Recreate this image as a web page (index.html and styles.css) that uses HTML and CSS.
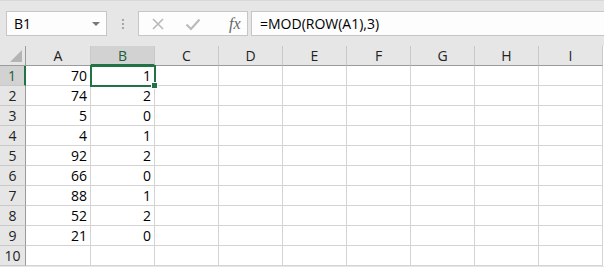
FILE: index.html
```html
<!DOCTYPE html>
<html lang="en">
<head>
    <meta charset="UTF-8">
    <title>MOD ROW</title>
    <link rel="stylesheet" href="styles.css">
</head>
<body>
    <div class="toolbar">
        <div class="name-box">
            <span>B1</span>
            <span class="caret"></span>
        </div>
        <div class="grip">
            <span></span><span></span><span></span>
        </div>
        <div class="buttons">
            <svg class="icon" width="14" height="14" viewBox="0 0 14 14">
                <path d="M2 2 L12 12 M12 2 L2 12" stroke="#b9b9b9" stroke-width="1.6" fill="none"/>
            </svg>
            <svg class="icon" width="16" height="14" viewBox="0 0 16 14">
                <path d="M1.5 7.5 L6 12 L14.5 2.5" stroke="#b9b9b9" stroke-width="2" fill="none"/>
            </svg>
            <span class="fx">fx</span>
        </div>
        <div class="formula">=MOD(ROW(A1),3)</div>
    </div>
    <div class="sheet">
        <div class="corner"><span class="tri"></span></div>
        <div class="col">A</div>
        <div class="col active">B</div>
        <div class="col">C</div>
        <div class="col">D</div>
        <div class="col">E</div>
        <div class="col">F</div>
        <div class="col">G</div>
        <div class="col">H</div>
        <div class="col">I</div>

        <div class="row active">1</div>
        <div class="cell">70</div><div class="cell selected">1<span class="handle"></span></div><div class="cell"></div><div class="cell"></div><div class="cell"></div><div class="cell"></div><div class="cell"></div><div class="cell"></div><div class="cell"></div>
        <div class="row">2</div>
        <div class="cell">74</div><div class="cell">2</div><div class="cell"></div><div class="cell"></div><div class="cell"></div><div class="cell"></div><div class="cell"></div><div class="cell"></div><div class="cell"></div>
        <div class="row">3</div>
        <div class="cell">5</div><div class="cell">0</div><div class="cell"></div><div class="cell"></div><div class="cell"></div><div class="cell"></div><div class="cell"></div><div class="cell"></div><div class="cell"></div>
        <div class="row">4</div>
        <div class="cell">4</div><div class="cell">1</div><div class="cell"></div><div class="cell"></div><div class="cell"></div><div class="cell"></div><div class="cell"></div><div class="cell"></div><div class="cell"></div>
        <div class="row">5</div>
        <div class="cell">92</div><div class="cell">2</div><div class="cell"></div><div class="cell"></div><div class="cell"></div><div class="cell"></div><div class="cell"></div><div class="cell"></div><div class="cell"></div>
        <div class="row">6</div>
        <div class="cell">66</div><div class="cell">0</div><div class="cell"></div><div class="cell"></div><div class="cell"></div><div class="cell"></div><div class="cell"></div><div class="cell"></div><div class="cell"></div>
        <div class="row">7</div>
        <div class="cell">88</div><div class="cell">1</div><div class="cell"></div><div class="cell"></div><div class="cell"></div><div class="cell"></div><div class="cell"></div><div class="cell"></div><div class="cell"></div>
        <div class="row">8</div>
        <div class="cell">52</div><div class="cell">2</div><div class="cell"></div><div class="cell"></div><div class="cell"></div><div class="cell"></div><div class="cell"></div><div class="cell"></div><div class="cell"></div>
        <div class="row">9</div>
        <div class="cell">21</div><div class="cell">0</div><div class="cell"></div><div class="cell"></div><div class="cell"></div><div class="cell"></div><div class="cell"></div><div class="cell"></div><div class="cell"></div>
        <div class="row">10</div>
        <div class="cell"></div><div class="cell"></div><div class="cell"></div><div class="cell"></div><div class="cell"></div><div class="cell"></div><div class="cell"></div><div class="cell"></div><div class="cell"></div>
    </div>
</body>
</html>
```

FILE: styles.css
```css
body {
    margin: 0;
    background-color: #e6e6e6;
    font-family: "Open Sans", "Noto Sans", sans-serif;
    font-size: 14px;
    color: #000000;
    width: 604px;
    height: 267px;
    overflow: hidden;
}

/* formula bar area */
.toolbar {
    height: 46px;
    box-sizing: border-box;
    border-top: 1px solid #d9d9d9;
    padding: 10px 0 0 6px;
    display: flex;
    align-items: flex-start;
}

.name-box {
    width: 101px;
    height: 25px;
    box-sizing: border-box;
    background-color: #fdfdfd;
    border: 1px solid #c6c6c6;
    display: flex;
    align-items: center;
    justify-content: space-between;
    padding: 0 6px 0 7px;
    font-size: 14px;
}

.caret {
    width: 0;
    height: 0;
    border-left: 4px solid transparent;
    border-right: 4px solid transparent;
    border-top: 4px solid #777777;
}

.grip {
    width: 31px;
    height: 25px;
    display: flex;
    flex-direction: column;
    align-items: center;
    justify-content: center;
    gap: 2px;
}

.grip span {
    width: 2px;
    height: 2px;
    background-color: #a6a6a6;
}

.buttons {
    width: 110px;
    height: 25px;
    box-sizing: border-box;
    background-color: #fdfdfd;
    border: 1px solid #c6c6c6;
    display: flex;
    align-items: center;
    padding-left: 12px;
    gap: 20px;
}

.fx {
    font-family: "Liberation Serif", serif;
    font-style: italic;
    font-size: 16px;
    color: #666666;
    margin-left: 8px;
}

.formula {
    flex: 1;
    height: 25px;
    box-sizing: border-box;
    margin-left: 3px;
    background-color: #fdfdfd;
    border: 1px solid #c6c6c6;
    border-right: none;
    padding-left: 8px;
    line-height: 23px;
    font-size: 14px;
}

/* grid */
.sheet {
    display: grid;
    grid-template-columns: 26px 65px repeat(8, 64px);
    grid-template-rows: 20px repeat(10, 20px);
    background-color: #ffffff;
}

.corner, .col {
    background-color: #e6e6e6;
    border-bottom: 1px solid #9b9b9b;
    border-right: 1px solid #c8c8c8;
    box-sizing: border-box;
}

.corner {
    position: relative;
    border-right-color: #9b9b9b;
}

.tri {
    position: absolute;
    right: 3px;
    bottom: 3px;
    width: 0;
    height: 0;
    border-left: 12px solid transparent;
    border-bottom: 12px solid #b4b4b4;
}

.col {
    text-align: center;
    line-height: 20px;
    color: #222222;
}

.col.active {
    background-color: #d2d2d2;
    border-bottom: 2px solid #217346;
    color: #1e5e38;
}

.row {
    background-color: #e6e6e6;
    border-right: 1px solid #9b9b9b;
    border-bottom: 1px solid #c8c8c8;
    box-sizing: border-box;
    text-align: center;
    line-height: 19px;
    color: #222222;
}

.row.active {
    background-color: #d2d2d2;
    border-right: 2px solid #217346;
    color: #1e5e38;
}

.cell {
    border-right: 1px solid #d4d4d4;
    border-bottom: 1px solid #d4d4d4;
    box-sizing: border-box;
    text-align: right;
    padding-right: 3px;
    line-height: 19px;
}

.selected {
    position: relative;
    outline: 2px solid #217346;
    outline-offset: -1px;
}

.handle {
    position: absolute;
    right: -4px;
    bottom: -4px;
    width: 5px;
    height: 5px;
    background-color: #217346;
    border: 1px solid #ffffff;
}
```
